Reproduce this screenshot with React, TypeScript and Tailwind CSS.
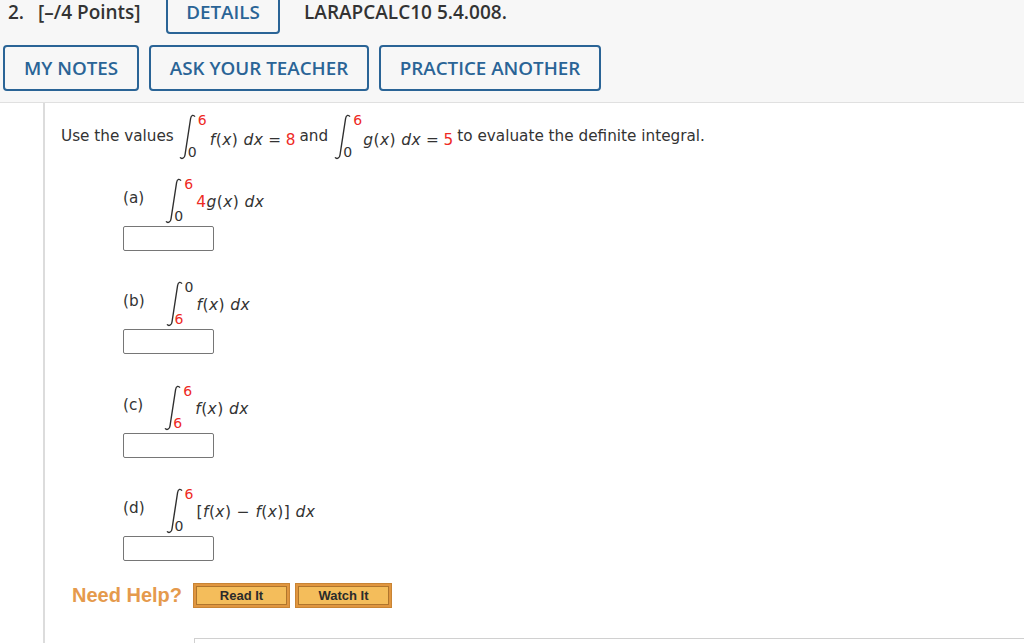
import React from "react";

function Integral({ up, low, upRed, lowRed, className = "" }: { up: string; low: string; upRed?: boolean; lowRed?: boolean; className?: string }) {
  return (
    <div className={`relative w-[28px] h-[45px] shrink-0 ${className}`}>
      <svg width="17" height="46" viewBox="0 0 17 46" fill="none" className="block">
        <path d="M16 2.6C14.6 .8 12.2 .6 11.6 4.5L6 41C5.6 44.4 2.8 45.4 1 43.4" stroke="#2f2f2f" strokeWidth="1.4" />
      </svg>
      <span className={`absolute left-[19px] top-[-2px] text-[14px] leading-[16px] ${upRed ? "text-[#ee2a24]" : "text-[#333333]"}`}>{up}</span>
      <span className={`absolute left-[9px] top-[30px] text-[14px] leading-[16px] ${lowRed ? "text-[#ee2a24]" : "text-[#333333]"}`}>{low}</span>
    </div>
  );
}

function Part({ label, integral, children, height }: { label: string; integral: React.ReactNode; children: React.ReactNode; height: string }) {
  return (
    <div className={height}>
      <div className="flex items-start h-[48px]">
        <span className="mt-[10px] mr-[21px] leading-[20px]">{label}</span>
        {integral}
        <span className="mt-[14px] leading-[20px] whitespace-pre text-[15.5px] tracking-[0.4px]">{children}</span>
      </div>
      <input className="block w-[91px] h-[25px] bg-white border border-[#767676] rounded-[2px]" />
    </div>
  );
}

function HelpButton({ label }: { label: string }) {
  return (
    <button className="w-[97px] h-[25px] bg-[#e0963f] border border-[#c98434] p-[2px] shrink-0">
      <span className="flex items-center justify-center h-full pt-[1px] bg-[#f4bd5b] border border-[#b0752c] text-[13px] font-bold text-[#2b2b2b] font-['Liberation_Sans',sans-serif]">{label}</span>
    </button>
  );
}

const btn = "flex items-center justify-center h-[46px] border-2 border-[#2a6496] rounded-[4px] text-[#2a6496] text-[18.8px] font-semibold";

export default function App() {
  return (
    <div className="w-[1024px] h-[643px] overflow-hidden bg-white text-[#333333] font-['DejaVu_Sans',sans-serif] text-[15.25px]">
      <header className="h-[103px] bg-[#f7f7f7] border-b border-[#e0e0e0] font-['Open_Sans',sans-serif]">
        <div className="flex items-start h-[45px]">
          <span className="ml-[8px] mt-[-1px] w-[30px] text-[19px] leading-[26px] font-semibold">2.</span>
          <span className="mt-[-1px] w-[128px] text-[19px] leading-[26px] font-semibold whitespace-pre">[–/4 Points]</span>
          <div className="mt-[-10px] flex items-center justify-center w-[114px] h-[44px] border-2 border-[#2a6496] rounded-[4px] text-[#2a6496] text-[18.8px] font-semibold">DETAILS</div>
          <span className="ml-[24px] mt-[-1px] text-[19px] leading-[26px] font-semibold">LARAPCALC10 5.4.008.</span>
        </div>
        <div className="flex ml-[3px]">
          <div className={`${btn} w-[136px]`}>MY NOTES</div>
          <div className={`${btn} w-[220px] ml-[10px]`}>ASK YOUR TEACHER</div>
          <div className={`${btn} w-[222px] ml-[10px]`}>PRACTICE ANOTHER</div>
        </div>
      </header>
      <main className="ml-[43px] h-[540px] border-l-2 border-[#dcdcdc]">
        <div className="flex items-start ml-[16px] pt-[11px] h-[75px] whitespace-pre">
          <span className="mt-[12px] leading-[20px]">Use the values</span>
          <Integral up="6" low="0" upRed className="ml-[5px]" />
          <span className="ml-[3px] mt-[16px] leading-[20px]"><span className="text-[15.5px] tracking-[0.4px]"><i>f</i>(<i>x</i>) <i>dx</i></span> = <span className="text-[#ee2a24]">8</span></span>
          <span className="ml-[4px] mt-[12px] leading-[20px]">and</span>
          <Integral up="6" low="0" upRed className="ml-[6px]" />
          <span className="ml-[1px] mt-[16px] leading-[20px]"><span className="text-[15.5px] tracking-[0.4px]"><i>g</i>(<i>x</i>) <i>dx</i></span> = <span className="text-[#ee2a24]">5</span></span>
          <span className="ml-[4px] mt-[12px] leading-[20px]">to evaluate the definite integral.</span>
        </div>
        <div className="ml-[78px]">
          <Part label="(a)" height="h-[103px]" integral={<Integral up="6" low="0" upRed />}><span className="ml-[3px]"><span className="text-[#ee2a24]">4</span><i>g</i>(<i>x</i>) <i>dx</i></span></Part>
          <Part label="(b)" height="h-[104px]" integral={<Integral up="0" low="6" lowRed />}><span className="ml-[3px]"><i>f</i>(<i>x</i>) <i>dx</i></span></Part>
          <Part label="(c)" height="h-[103px]" integral={<Integral up="6" low="6" upRed lowRed />}><span className="ml-[3px]"><i>f</i>(<i>x</i>) <i>dx</i></span></Part>
          <Part label="(d)" height="h-[103px]" integral={<Integral up="6" low="0" upRed />}><span className="ml-[3px]">[<i>f</i>(<i>x</i>) − <i>f</i>(<i>x</i>)] <i>dx</i></span></Part>
        </div>
        <div className="flex items-center ml-[27px] mt-[-11px]">
          <span className="w-[121px] text-[20px] font-bold text-[#e59a4c] font-['Liberation_Sans',sans-serif]">Need Help?</span>
          <div className="flex gap-[5px]">
            <HelpButton label="Read It" />
            <HelpButton label="Watch It" />
          </div>
        </div>
        <div className="ml-[149px] mt-[28px] h-[10px] bg-white border-t border-l border-[#d0d0d0]" />
      </main>
    </div>
  );
}
